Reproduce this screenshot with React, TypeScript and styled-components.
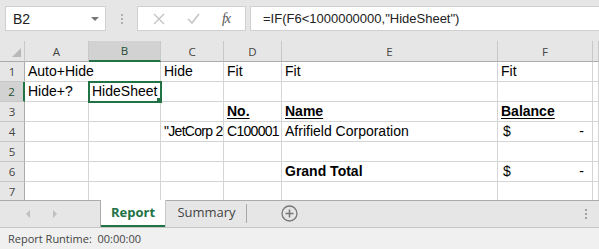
import React from 'react';
import styled, { createGlobalStyle } from 'styled-components';

const GREEN = '#217346';
const GRID = '#d4d4d4';

const GlobalStyle = createGlobalStyle`
  html, body {
    margin: 0;
    padding: 0;
    background: #ffffff;
  }
  body {
    font-family: "Liberation Sans", Arial, sans-serif;
  }
`;

const Window = styled.div`
  width: 599px;
  height: 249px;
  display: flex;
  flex-direction: column;
  overflow: hidden;
  background: #e6e6e6;
`;

const FormulaBar = styled.div`
  height: 41px;
  flex: none;
  display: flex;
  align-items: flex-start;
  padding: 6px 0 0 5px;
  box-sizing: border-box;
  background: #e6e6e6;
`;

const NameBox = styled.div`
  width: 101px;
  height: 25px;
  box-sizing: border-box;
  background: #fff;
  border: 1px solid #d0d0d0;
  display: flex;
  align-items: center;
  justify-content: space-between;
  padding: 0 6px 0 7px;
  font-size: 14px;
  color: #222;
`;

const Caret = styled.span`
  width: 0;
  height: 0;
  border-left: 4px solid transparent;
  border-right: 4px solid transparent;
  border-top: 4px solid #777;
`;

const Grip = styled.div`
  width: 31px;
  height: 25px;
  display: flex;
  flex-direction: column;
  align-items: center;
  justify-content: center;
  gap: 2px;
  span {
    width: 2px;
    height: 2px;
    background: #b0b0b0;
  }
`;

const FxButtons = styled.div`
  width: 109px;
  height: 25px;
  box-sizing: border-box;
  background: #fff;
  border: 1px solid #d0d0d0;
  display: flex;
  align-items: center;
  justify-content: space-around;
  padding: 0 4px;
`;

const FxLabel = styled.span`
  font-family: "Liberation Serif", serif;
  font-style: italic;
  font-size: 14px;
  color: #555;
  letter-spacing: -1px;
`;

const FormulaInput = styled.div`
  flex: 1;
  height: 25px;
  margin-left: 4px;
  box-sizing: border-box;
  background: #fff;
  border: 1px solid #d0d0d0;
  border-right: none;
  display: flex;
  align-items: center;
  padding-left: 12px;
  font-size: 13px;
  color: #222;
  white-space: nowrap;
`;

const Sheet = styled.div`
  height: 159px;
  flex: none;
  overflow: hidden;
  background: #fff;
  display: grid;
  grid-template-columns: 25px 64px 72px 63px 58px 216px 95px 1fr;
  grid-template-rows: 21px repeat(7, 20px);
`;

const Corner = styled.div`
  background: #e6e6e6;
  border-right: 1px solid #c8c8c8;
  border-bottom: 1px solid #ababab;
  box-sizing: border-box;
  display: flex;
  align-items: flex-end;
  justify-content: flex-end;
  padding: 0 3px 4px 0;
`;

const ColHead = styled.div<{ $active?: boolean }>`
  background: ${p => (p.$active ? '#d2d2d2' : '#e6e6e6')};
  border-right: 1px solid #c8c8c8;
  border-bottom: ${p => (p.$active ? `2px solid ${GREEN}` : '1px solid #ababab')};
  box-sizing: border-box;
  display: flex;
  align-items: center;
  justify-content: center;
  font-family: "Open Sans", sans-serif;
  font-size: 11.5px;
  color: ${p => (p.$active ? '#1e4e33' : '#444')};
`;

const RowHead = styled.div<{ $active?: boolean }>`
  background: ${p => (p.$active ? '#d2d2d2' : '#e6e6e6')};
  border-right: ${p => (p.$active ? `2px solid ${GREEN}` : '1px solid #ababab')};
  border-bottom: 1px solid #c8c8c8;
  box-sizing: border-box;
  display: flex;
  align-items: center;
  justify-content: center;
  font-family: "Open Sans", sans-serif;
  font-size: 11.5px;
  color: ${p => (p.$active ? '#1e4e33' : '#444')};
`;

const Cell = styled.div<{
  $bold?: boolean;
  $under?: boolean;
  $spill?: boolean;
  $tight?: boolean;
  $selected?: boolean;
}>`
  position: relative;
  box-sizing: border-box;
  border-right: ${p => (p.$spill ? 'none' : `1px solid ${GRID}`)};
  border-bottom: 1px solid ${GRID};
  display: flex;
  align-items: flex-end;
  padding: 0 0 2px 3px;
  line-height: 16px;
  font-size: 14px;
  color: #000;
  white-space: nowrap;
  overflow: ${p => (p.$spill ? 'visible' : 'hidden')};
  font-weight: ${p => (p.$bold ? 'bold' : 'normal')};
  text-decoration: ${p => (p.$under ? 'underline' : 'none')};
  text-decoration-thickness: 1px;
  text-underline-offset: 2px;
  letter-spacing: ${p => (p.$tight ? '-0.7px' : 'normal')};
  z-index: ${p => (p.$spill || p.$selected ? 1 : 0)};
  ${p =>
    p.$selected &&
    `
    outline: 2px solid ${GREEN};
    outline-offset: -1px;
    &::after {
      content: '';
      position: absolute;
      right: -3px;
      bottom: -3px;
      width: 5px;
      height: 5px;
      background: ${GREEN};
      border: 1px solid #fff;
    }
  `}
`;

const Money = styled(Cell)`
  justify-content: space-between;
  padding: 0 8px 2px 5px;
`;

const TabBar = styled.div`
  height: 28px;
  flex: none;
  display: flex;
  align-items: stretch;
  background: #e6e6e6;
  border-top: 1px solid #ababab;
  border-bottom: 1px solid #c6c6c6;
  box-sizing: border-box;
`;

const NavArrows = styled.div`
  width: 100px;
  display: flex;
  align-items: center;
  padding-left: 26px;
  gap: 23px;
  box-sizing: border-box;
`;

const Arrow = styled.span<{ $dir: 'left' | 'right' }>`
  width: 0;
  height: 0;
  border-top: 4px solid transparent;
  border-bottom: 4px solid transparent;
  ${p => (p.$dir === 'left' ? 'border-right: 4px solid #c0c0c0;' : 'border-left: 4px solid #c0c0c0;')}
`;

const Tab = styled.div<{ $active?: boolean }>`
  width: ${p => (p.$active ? '66px' : '81px')};
  margin-top: -1px;
  box-sizing: border-box;
  display: flex;
  align-items: center;
  justify-content: center;
  padding-bottom: 3px;
  font-family: "Open Sans", sans-serif;
  font-size: 13px;
  background: ${p => (p.$active ? '#fff' : 'transparent')};
  color: ${p => (p.$active ? GREEN : '#444')};
  font-weight: ${p => (p.$active ? 'bold' : 'normal')};
  border-left: ${p => (p.$active ? '1px solid #ababab' : 'none')};
  border-right: ${p => (p.$active ? '1px solid #c8c8c8' : 'none')};
  box-shadow: ${p => (p.$active ? `inset 0 -2px 0 ${GREEN}` : 'none')};
  position: relative;
  ${p =>
    !p.$active &&
    `
    &::after {
      content: '';
      position: absolute;
      right: 0;
      top: 4px;
      bottom: 4px;
      width: 1px;
      background: #a8a8a8;
    }
  `}
`;

const AddButton = styled.div`
  width: 84px;
  display: flex;
  align-items: center;
  justify-content: center;
  padding-bottom: 2px;
`;

const Filler = styled.div`
  flex: 1;
  display: flex;
  justify-content: flex-end;
  align-items: center;
  padding-right: 12px;
`;

const VDots = styled.div`
  display: flex;
  flex-direction: column;
  gap: 2px;
  span {
    width: 2px;
    height: 2px;
    background: #a0a0a0;
  }
`;

const StatusBar = styled.div`
  flex: 1;
  background: #f0f0f0;
  display: flex;
  align-items: center;
  padding: 0 0 0 8px;
  font-family: "Open Sans", sans-serif;
  font-size: 11px;
  color: #444;
  white-space: pre;
`;

const CrossIcon = () => (
  <svg width="12" height="12" viewBox="0 0 12 12">
    <path d="M1 1 L11 11 M11 1 L1 11" stroke="#c4c4c4" strokeWidth="1.4" fill="none" />
  </svg>
);

const CheckIcon = () => (
  <svg width="13" height="11" viewBox="0 0 13 11">
    <path d="M1 6 L5 10 L12 1" stroke="#c4c4c4" strokeWidth="1.6" fill="none" />
  </svg>
);

const PlusCircle = () => (
  <svg width="17" height="17" viewBox="0 0 17 17">
    <circle cx="8.5" cy="8.5" r="7.5" stroke="#777" strokeWidth="1.3" fill="none" />
    <path d="M8.5 4.5 V12.5 M4.5 8.5 H12.5" stroke="#777" strokeWidth="1.5" />
  </svg>
);

const CornerTriangle = () => (
  <svg width="9" height="9" viewBox="0 0 9 9">
    <polygon points="9,0 9,9 0,9" fill="#b8b8b8" />
  </svg>
);

const columns = ['A', 'B', 'C', 'D', 'E', 'F', ''];

type CellData = {
  text?: string;
  bold?: boolean;
  under?: boolean;
  spill?: boolean;
  tight?: boolean;
  money?: boolean;
};

const rows: CellData[][] = [
  [{ text: 'Auto+Hide', spill: true }, {}, { text: 'Hide' }, { text: 'Fit' }, { text: 'Fit' }, { text: 'Fit' }, {}],
  [{ text: 'Hide+?' }, { text: 'HideSheet' }, {}, {}, {}, {}, {}],
  [{}, {}, {}, { text: 'No.', bold: true, under: true }, { text: 'Name', bold: true, under: true }, { text: 'Balance', bold: true, under: true }, {}],
  [{}, {}, { text: '"JetCorp 2015"', tight: true }, { text: 'C100001', tight: true }, { text: 'Afrifield Corporation' }, { money: true }, {}],
  [{}, {}, {}, {}, {}, {}, {}],
  [{}, {}, {}, {}, { text: 'Grand Total', bold: true }, { money: true }, {}],
  [{}, {}, {}, {}, {}, {}, {}],
];

export default function App() {
  return (
    <>
      <GlobalStyle />
      <Window>
        <FormulaBar>
          <NameBox>
            B2
            <Caret />
          </NameBox>
          <Grip>
            <span />
            <span />
            <span />
          </Grip>
          <FxButtons>
            <CrossIcon />
            <CheckIcon />
            <FxLabel>fx</FxLabel>
          </FxButtons>
          <FormulaInput>=IF(F6&lt;1000000000,"HideSheet")</FormulaInput>
        </FormulaBar>

        <Sheet>
          <Corner>
            <CornerTriangle />
          </Corner>
          {columns.map((c, i) => (
            <ColHead key={i} $active={c === 'B'}>
              {c}
            </ColHead>
          ))}
          {rows.map((row, r) => (
            <React.Fragment key={r}>
              <RowHead $active={r === 1}>{r + 1}</RowHead>
              {row.map((cell, c) =>
                cell.money ? (
                  <Money key={c}>
                    <span>$</span>
                    <span>-</span>
                  </Money>
                ) : (
                  <Cell
                    key={c}
                    $bold={cell.bold}
                    $under={cell.under}
                    $spill={cell.spill}
                    $tight={cell.tight}
                    $selected={r === 1 && c === 1}
                  >
                    {cell.text}
                  </Cell>
                )
              )}
            </React.Fragment>
          ))}
        </Sheet>

        <TabBar>
          <NavArrows>
            <Arrow $dir="left" />
            <Arrow $dir="right" />
          </NavArrows>
          <Tab $active>Report</Tab>
          <Tab>Summary</Tab>
          <AddButton>
            <PlusCircle />
          </AddButton>
          <Filler>
            <VDots>
              <span />
              <span />
              <span />
            </VDots>
          </Filler>
        </TabBar>

        <StatusBar>Report Runtime:  00:00:00</StatusBar>
      </Window>
    </>
  );
}
